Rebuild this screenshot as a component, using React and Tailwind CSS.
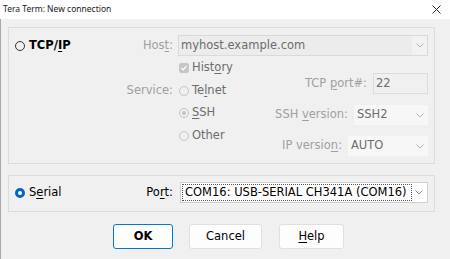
import React from 'react';

const Chevron = ({ stroke = '#b4b4b4' }) => (
  <svg width="8" height="5" viewBox="0 0 8 5">
    <polyline points="0.5,0.5 4,4 7.5,0.5" fill="none" stroke={stroke} strokeWidth="1" />
  </svg>
);

function Radio({ tone }) {
  // tone: 'on' (blue, selected), 'dark' (enabled), 'dim' (disabled), 'dimOn' (disabled, selected)
  if (tone === 'on') {
    return (
      <span className="w-[10px] h-[10px] rounded-full border-[3px] border-[#0067c0] bg-white shrink-0" />
    );
  }
  if (tone === 'dimOn') {
    return (
      <span className="w-[10px] h-[10px] rounded-full border border-[#c4c4c4] bg-[#f0f0f0] flex items-center justify-center shrink-0">
        <span className="w-[4px] h-[4px] rounded-full bg-[#c4c4c4]" />
      </span>
    );
  }
  return (
    <span
      className={
        tone === 'dark'
          ? 'w-[10px] h-[10px] rounded-full border border-[#333333] bg-[#f0f0f0] shrink-0'
          : 'w-[10px] h-[10px] rounded-full border border-[#c4c4c4] bg-[#f0f0f0] shrink-0'
      }
    />
  );
}

const U = ({ children }) => <span className="underline underline-offset-2 decoration-1">{children}</span>;

export default function App() {
  return (
    <div className="w-[450px] h-[259px] bg-[#f0f0f0] flex flex-col overflow-hidden font-['DejaVu_Sans',sans-serif] text-[11.5px] text-black">
      {/* title bar */}
      <div className="h-[19px] bg-white flex items-center justify-between pl-[3px] pr-[9px] shrink-0">
        <span className="font-['Noto_Sans',sans-serif] text-[8.5px] text-[#1a1a1a]">Tera Term: New connection</span>
        <svg width="9" height="9" viewBox="0 0 9 9">
          <path d="M0.5 0.5 L8.5 8.5 M8.5 0.5 L0.5 8.5" stroke="#222" strokeWidth="1" />
        </svg>
      </div>

      <div className="flex-1 flex flex-col border-l border-[#a8a8a8]">
        {/* TCP/IP group */}
        <div className="mt-[8px] ml-[7px] w-[427px] h-[137px] border border-[#dcdcdc] flex flex-col pt-[7px]">
          <div className="flex items-center h-[21px]">
            <div className="w-[164px] flex items-center justify-between pl-[6px]">
              <div className="flex items-center gap-[4px]">
                <Radio tone="dark" />
                <span className="font-semibold">TCP/<U>I</U>P</span>
              </div>
              <span className="text-[#a0a0a0]">Hos<U>t</U>:</span>
            </div>
            <div className="ml-[5px] w-[250px] h-[21px] border border-[#dadada] bg-[#ececec] flex items-center">
              <span className="flex-1 pl-[2px] text-[#6d6d6d]">myhost.example.com</span>
              <span className="w-[15px] h-full bg-[#f2f2f2] flex items-center justify-center">
                <Chevron />
              </span>
            </div>
          </div>

          <div className="flex mt-[1px]">
            <div className="grid grid-cols-[164px_auto] grid-rows-[22px_23px_22px_23px] items-center">
              <span />
              <div className="flex items-center gap-[3px] pl-[6px] text-[#6d6d6d]">
                <span className="w-[10px] h-[10px] rounded-[2px] bg-[#c6c6c6] flex items-center justify-center">
                  <svg width="8" height="8" viewBox="0 0 8 8">
                    <polyline points="1.5,4 3.2,5.8 6.5,2" fill="none" stroke="#ffffff" strokeWidth="1.2" />
                  </svg>
                </span>
                <span>Hist<U>o</U>ry</span>
              </div>

              <span className="text-right text-[#a0a0a0]">Service:</span>
              <div className="flex items-center gap-[3px] pl-[6px] text-[#6d6d6d]">
                <Radio tone="dim" />
                <span>Te<U>l</U>net</span>
              </div>

              <span />
              <div className="flex items-center gap-[3px] pl-[6px] text-[#6d6d6d]">
                <Radio tone="dimOn" />
                <span><U>S</U>SH</span>
              </div>

              <span />
              <div className="flex items-center gap-[3px] pl-[6px] text-[#6d6d6d]">
                <Radio tone="dim" />
                <span>Other</span>
              </div>
            </div>

            <div className="ml-auto mr-[6px] flex flex-col items-end">
              <div className="mt-[16px] h-[21px] flex items-center gap-[6px]">
                <span className="text-[#a0a0a0]">TCP <U>p</U>ort#:</span>
                <div className="w-[55px] h-[21px] border border-[#dcdcdc] flex items-center pl-[2px] text-[#6d6d6d]">22</div>
              </div>
              <div className="mt-[11px] h-[20px] flex items-center gap-[6px]">
                <span className="text-[#a0a0a0]">SSH <U>v</U>ersion:</span>
                <div className="w-[74px] h-[20px] bg-[#f7f7f7] flex items-center justify-between pl-[3px] pr-[4px] text-[#6d6d6d]">
                  <span>SSH2</span>
                  <Chevron />
                </div>
              </div>
              <div className="mt-[11px] h-[20px] flex items-center gap-[6px]">
                <span className="text-[#a0a0a0]">IP versio<U>n</U>:</span>
                <div className="w-[80px] h-[20px] bg-[#f7f7f7] flex items-center justify-between pl-[3px] pr-[4px] text-[#6d6d6d]">
                  <span>AUTO</span>
                  <Chevron />
                </div>
              </div>
            </div>
          </div>
        </div>

        {/* Serial group */}
        <div className="mt-[11px] ml-[7px] w-[427px] h-[37px] border border-[#dcdcdc] pt-[6px]">
          <div className="flex items-center h-[21px]">
            <div className="w-[164px] flex items-center justify-between pl-[6px]">
              <div className="flex items-center gap-[4px]">
                <Radio tone="on" />
                <span>S<U>e</U>rial</span>
              </div>
              <span>Po<U>r</U>t:</span>
            </div>
            <div className="ml-[7px] w-[248px] h-[21px] border border-[#d0d0d0] bg-white flex items-center p-[1px]">
              <span className="flex-1 h-full border border-dotted border-[#555] flex items-center pl-[2px] whitespace-nowrap">
                COM16: USB-SERIAL CH341A (COM16)
              </span>
              <span className="w-[14px] h-full flex items-center justify-center">
                <Chevron stroke="#8a8a8a" />
              </span>
            </div>
          </div>
        </div>

        {/* buttons */}
        <div className="mt-[12px] ml-[112px] flex">
          <button className="w-[60px] h-[25px] rounded-[3px] border border-[#0078d4] bg-[#fdfdfd] font-semibold">OK</button>
          <button className="ml-[16px] w-[73px] h-[25px] rounded-[3px] border border-[#e0e0e0] bg-[#fdfdfd]">Cancel</button>
          <button className="ml-[17px] w-[65px] h-[25px] rounded-[3px] border border-[#e0e0e0] bg-[#fdfdfd]"><U>H</U>elp</button>
        </div>
      </div>
    </div>
  );
}
